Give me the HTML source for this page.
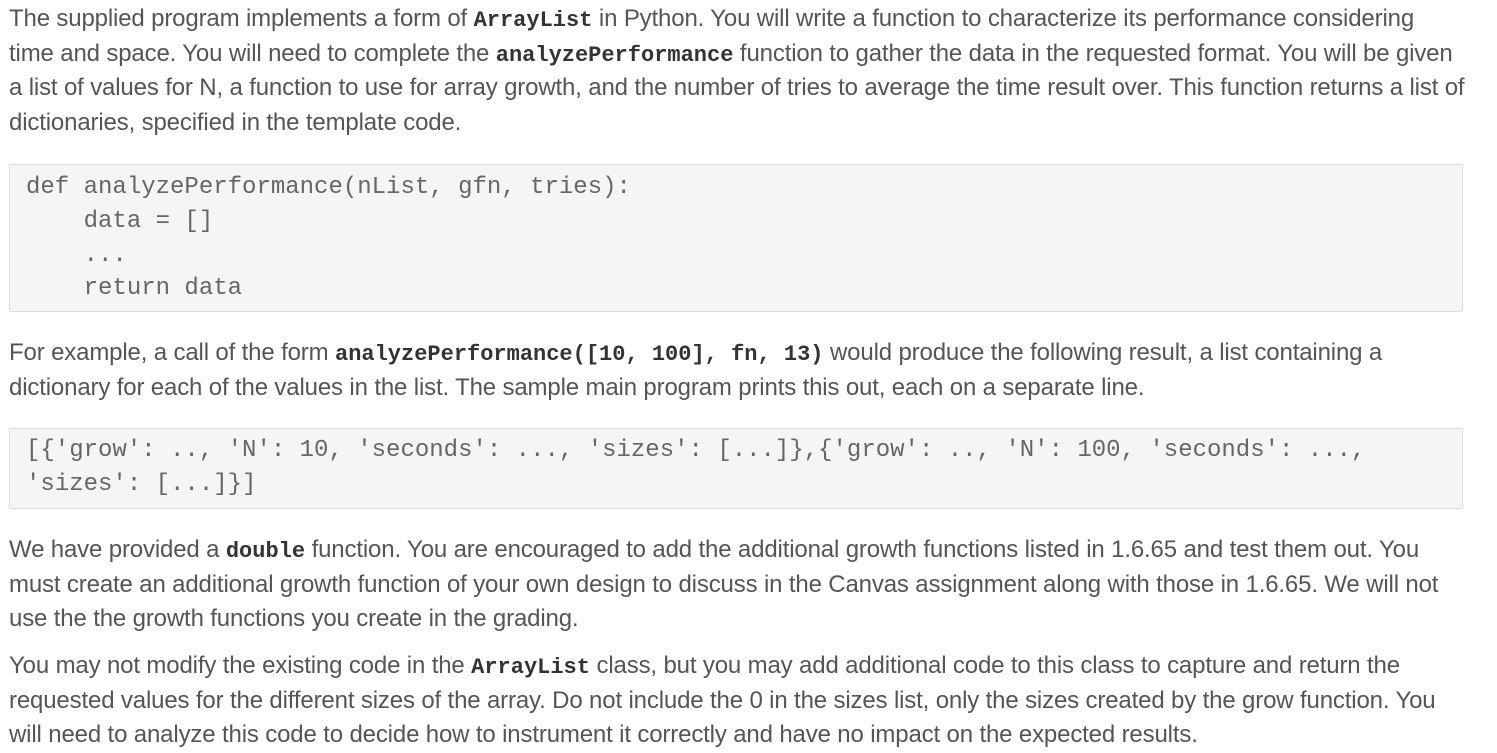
<!DOCTYPE html>
<html><head><meta charset="utf-8"><style>
html,body{margin:0;padding:0;background:#fff;width:1497px;height:750px;overflow:hidden}
body{font-family:"Liberation Sans",sans-serif;color:#555;font-size:24px}
.p{position:absolute;left:9px;line-height:34.6px;white-space:nowrap;letter-spacing:-0.15px}
code{font-family:"Liberation Mono",monospace;font-weight:bold;color:#333;font-size:22px;letter-spacing:0;line-height:1;vertical-align:baseline}
.box{position:absolute;left:9px;width:1452px;background:#f5f5f5;border:1px solid #ddd;border-radius:2px}
.box pre{margin:0;position:absolute;left:16px;font-family:"Liberation Mono",monospace;font-size:24px;color:#666;line-height:33.8px}
</style></head><body>
<div class="p" style="top:2px">The supplied program implements a form of <code>ArrayList</code> in Python. You will write a function to characterize its performance considering<br>time and space. You will need to complete the <code>analyzePerformance</code> function to gather the data in the requested format. You will be given<br>a list of values for N, a function to use for array growth, and the number of tries to average the time result over. This function returns a list of<br>dictionaries, specified in the template code.</div>
<div class="box" style="top:164px;height:146px"><pre style="top:6px">def analyzePerformance(nList, gfn, tries):
    data = []
    ...
    return data</pre></div>
<div class="p" style="top:336px">For example, a call of the form <code>analyzePerformance([10, 100], fn, 13)</code> would produce the following result, a list containing a<br>dictionary for each of the values in the list. The sample main program prints this out, each on a separate line.</div>
<div class="box" style="top:428px;height:79px"><pre style="top:5px">[{'grow': .., 'N': 10, 'seconds': ..., 'sizes': [...]},{'grow': .., 'N': 100, 'seconds': ...,
'sizes': [...]}]</pre></div>
<div class="p" style="top:533px">We have provided a <code>double</code> function. You are encouraged to add the additional growth functions listed in 1.6.65 and test them out. You<br>must create an additional growth function of your own design to discuss in the Canvas assignment along with those in 1.6.65. We will not<br>use the the growth functions you create in the grading.</div>
<div class="p" style="top:649px">You may not modify the existing code in the <code>ArrayList</code> class, but you may add additional code to this class to capture and return the<br>requested values for the different sizes of the array. Do not include the 0 in the sizes list, only the sizes created by the grow function. You<br>will need to analyze this code to decide how to instrument it correctly and have no impact on the expected results.</div>
</body></html>
